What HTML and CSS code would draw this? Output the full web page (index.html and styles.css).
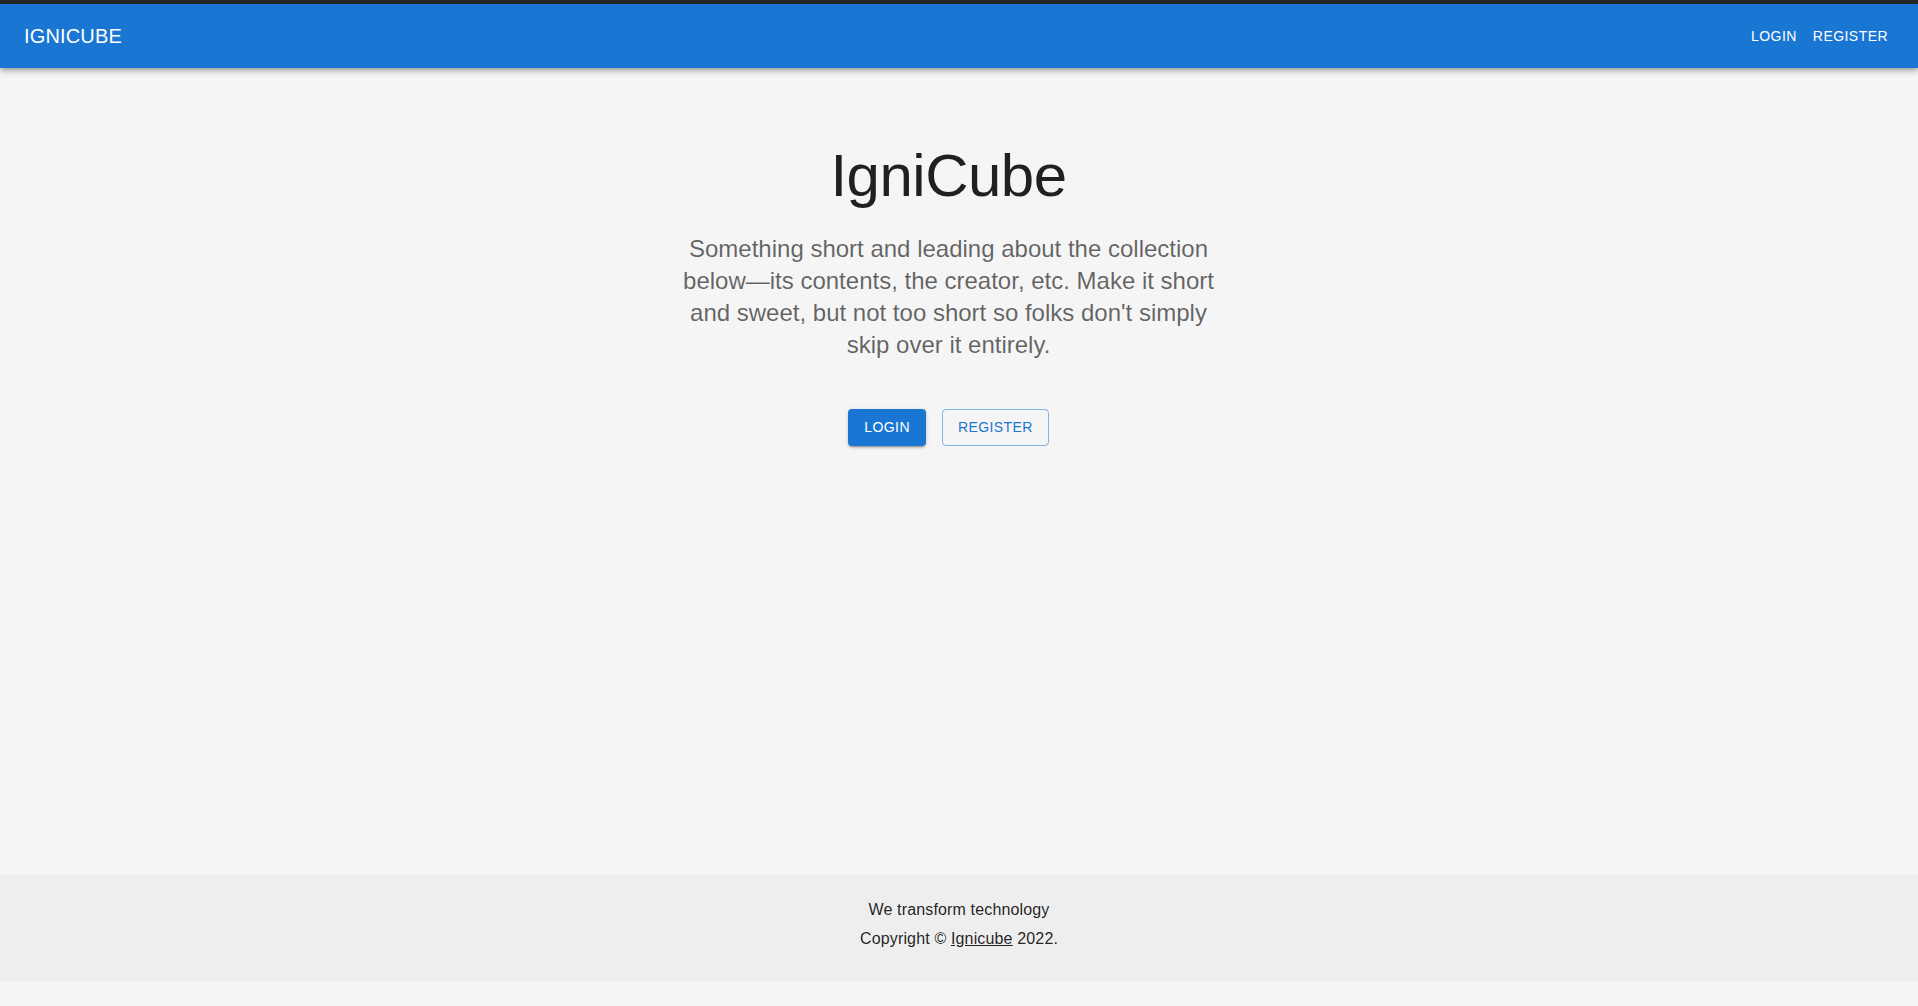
FILE: index.html
```html
<!DOCTYPE html>
<html lang="en">
<head>
<meta charset="utf-8">
<title>IgniCube</title>
<link rel="stylesheet" href="styles.css">
</head>
<body>
<div class="page">
  <div class="top-strip"></div>
  <header class="appbar">
    <div class="brand">IGNICUBE</div>
    <nav class="nav">
      <a class="nav-btn" href="#">Login</a>
      <a class="nav-btn" href="#">Register</a>
    </nav>
  </header>
  <main class="main">
    <div class="hero">
      <h1 class="hero-title">IgniCube</h1>
      <p class="hero-text">Something short and leading about the collection below—its contents, the creator, etc. Make it short and sweet, but not too short so folks don't simply skip over it entirely.</p>
      <div class="actions">
        <a class="btn btn-contained" href="#">Login</a>
        <a class="btn btn-outlined" href="#">Register</a>
      </div>
    </div>
  </main>
  <footer class="footer">
    <p class="footer-line">We transform technology</p>
    <p class="footer-line footer-copy">Copyright © <a class="footer-link" href="#">Ignicube</a> 2022.</p>
  </footer>
</div>
</body>
</html>
```

FILE: styles.css
```css
* { box-sizing: border-box; }

html, body {
  margin: 0;
  padding: 0;
  height: 100%;
}

body {
  background: #f5f5f5;
  font-family: "Liberation Sans", Arial, Helvetica, sans-serif;
  color: rgba(0, 0, 0, 0.87);
}

.page {
  display: flex;
  flex-direction: column;
  height: 100vh;
}

.top-strip {
  height: 4px;
  background: #272727;
  flex: none;
}

.appbar {
  flex: none;
  height: 64px;
  background: #1976d2;
  color: #fff;
  display: flex;
  align-items: center;
  justify-content: space-between;
  padding: 0 22px 0 24px;
  position: relative;
  z-index: 2;
  box-shadow: 0px 2px 4px -1px rgba(0,0,0,0.2), 0px 4px 5px 0px rgba(0,0,0,0.14), 0px 1px 10px 0px rgba(0,0,0,0.12);
}

.brand {
  font-size: 20px;
  line-height: 1.6;
  font-weight: 400;
  letter-spacing: 0.0075em;
}

.nav {
  display: flex;
  align-items: center;
}

.nav-btn {
  color: #fff;
  text-decoration: none;
  text-transform: uppercase;
  font-size: 14px;
  font-weight: 400;
  letter-spacing: 0.45px;
  line-height: 1.75;
  padding: 6px 8px;
  border-radius: 4px;
}

.main {
  flex: 1;
  padding: 72px 21px 0 0;
}

.hero {
  max-width: 600px;
  margin: 0 auto;
  padding: 0 24px;
  text-align: center;
}

.hero-title {
  margin: 0 0 21px;
  font-size: 60px;
  line-height: 1.2;
  font-weight: 400;
  letter-spacing: -0.00833em;
  color: rgba(0, 0, 0, 0.87);
}

.hero-text {
  margin: 0;
  font-size: 24px;
  line-height: 32px;
  font-weight: 400;
  color: rgba(0, 0, 0, 0.6);
}

.actions {
  margin-top: 48px;
  display: flex;
  justify-content: center;
  gap: 16px;
}

.btn {
  display: inline-block;
  text-decoration: none;
  text-transform: uppercase;
  font-size: 14px;
  font-weight: 400;
  letter-spacing: 0.4px;
  line-height: 1.75;
  border-radius: 4px;
}

.btn-contained {
  background: #1976d2;
  color: #fff;
  padding: 6px 16px;
  box-shadow: 0px 3px 1px -2px rgba(0,0,0,0.2), 0px 2px 2px 0px rgba(0,0,0,0.14), 0px 1px 5px 0px rgba(0,0,0,0.12);
}

.btn-outlined {
  color: #1976d2;
  padding: 5px 15px;
  border: 1px solid rgba(25, 118, 210, 0.5);
}

.footer {
  flex: none;
  background: #eeeeee;
  padding: 24px 16px 30px;
  margin-bottom: 25px;
  text-align: center;
}

.footer-line {
  margin: 0;
  font-size: 16px;
  line-height: 24px;
  letter-spacing: 0.15px;
  color: rgba(0, 0, 0, 0.87);
}

.footer-copy {
  margin-top: 5px;
}

.footer-link {
  color: inherit;
  text-decoration: underline;
}
```
